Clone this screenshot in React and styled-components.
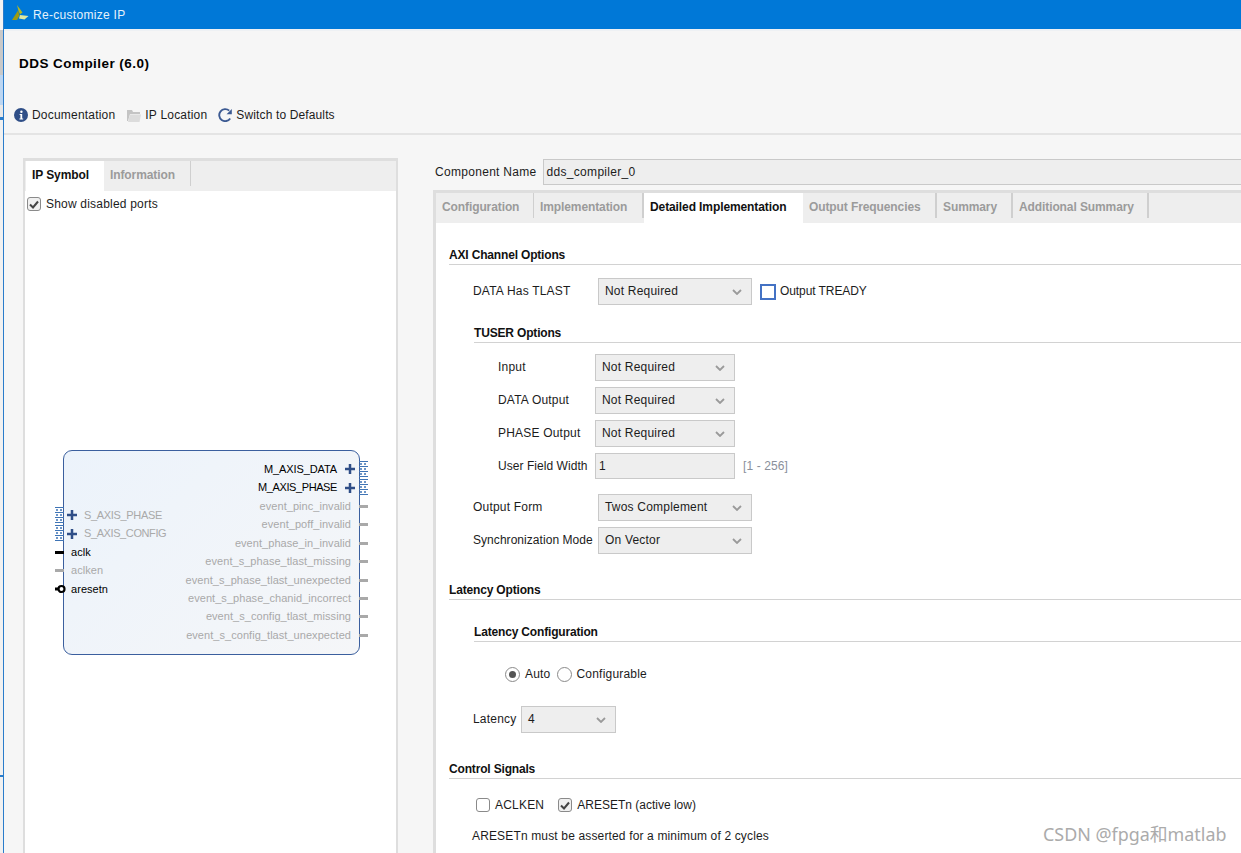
import React from "react";
import styled, { createGlobalStyle } from "styled-components";

const Global = createGlobalStyle`
  html, body { margin: 0; padding: 0; background: #f6f6f6; overflow: hidden; }
  * { box-sizing: border-box; }
`;

const Page = styled.div`
  width: 1241px; height: 853px; display: flex; overflow: hidden; position: relative;
  font-family: "Liberation Sans", Arial, sans-serif; font-size: 12px; letter-spacing: .2px; color: #1c1c1c;
`;
const BackStrip = styled.div`
  width: 3px; flex: none; display: flex; flex-direction: column; background: #f1f1f1;
`;
const StripBit = styled.div`
  height: ${p => p.$h}px; flex: none; background: ${p => p.$c};
`;
const Window = styled.div`
  flex: 1; min-width: 0; display: flex; flex-direction: column; border-left: 1px solid #2a7ccb; background: #f6f6f6;
`;
const TitleBar = styled.div`
  height: 29px; flex: none; display: flex; align-items: center; gap: 4px; padding-left: 8px; background: #0078d7; color: #e6f2fb; letter-spacing: .3px;
`;
const Header = styled.div`
  height: 106px; flex: none; display: flex; flex-direction: column; border-top: 2px solid #eef1f4; border-bottom: 2px solid #e4e4e4; padding-left: 10px;
`;
const Title = styled.h1`
  margin: 25px 0 0 5px; font-size: 13.5px; line-height: 16px; font-weight: 700; color: #000; letter-spacing: .45px;
`;
const Toolbar = styled.div`
  display: flex; align-items: center; margin-top: 35px; height: 16px;
`;
const ToolItem = styled.div`
  display: flex; align-items: center; gap: 4px; margin-right: ${p => p.$gap}px; white-space: nowrap; letter-spacing: ${p => p.$ls ?? .2}px;
`;
const Body = styled.div`
  flex: 1; min-height: 0; display: flex; padding: 23px 0 0 19px;
`;
const LeftPanel = styled.section`
  width: 375px; flex: none; display: flex; flex-direction: column; border: solid #dedede; border-width: 3px 2px 0 2px; background: #fff;
`;
const TabBar = styled.div`
  height: 30px; flex: none; display: flex; background: #eeeeee; padding-left: ${p => p.$pad || 0}px;
`;
const Tab = styled.div`
  width: ${p => p.$w}px; flex: none; font-weight: 700; letter-spacing: -.1px; padding-left: ${p => p.$pad || 6}px; line-height: 28px; height: ${p => p.$active ? 30 : 25}px; white-space: nowrap;
  color: ${p => p.$active ? "#111" : "#9b9b9b"};
  background: ${p => p.$active ? "#fff" : "transparent"};
  border-right: ${p => p.$sep || 0}px solid #cfcfcf;
`;
const CheckRow = styled.label`
  display: flex; align-items: center; gap: 5px; white-space: nowrap;
`;
const ShowRow = styled(CheckRow)`
  margin: 6px 0 0 2px; height: 14px;
`;
const Box = styled.span`
  width: 14px; height: 14px; flex: none; display: flex; align-items: center; justify-content: center; border-radius: 3px; border: 1px solid #8a8a8a; background: ${p => p.$on ? "#f0f0f0" : "#fff"};
`;
const Symbol = styled.div`
  position: relative; width: 297px; height: 205px; margin: 239px 0 0 38px; flex: none; display: flex; justify-content: space-between;
  border: 1px solid #3b5f9e; border-radius: 9px; background: linear-gradient(135deg, #ecf3fb 0%, #f5f6f8 100%);
  font-size: 11px; letter-spacing: .05px;
`;
const PinColumn = styled.div`
  display: flex; flex-direction: column; padding-top: ${p => p.$top}px; align-items: ${p => p.$right ? "flex-end" : "flex-start"};
`;
const PinSpacer = styled.div`
  height: 46px; flex: none;
`;
const Pin = styled.div`
  position: relative; height: 18.45px; line-height: 17px; white-space: nowrap; color: ${p => p.$off ? "#a9a9a9" : "#000"};
  padding-left: ${p => p.$pl || 0}px; padding-right: ${p => p.$pr || 0}px; letter-spacing: ${p => p.$ls ?? .05}px;
`;
const Stub = styled.span`
  position: absolute; top: 7px; width: 9px; height: 3px; background: ${p => p.$off ? "#a9a9a9" : "#000"};
  ${p => p.$right ? "right: -9px;" : "left: -9px;"}
`;
const PortIcon = styled.svg`
  position: absolute; top: ${p => p.$t}px; ${p => p.$side}: ${p => p.$at}px;
`;
const Watermark = styled.div`
  position: absolute; left: 1043px; top: 822px; font-family: "Noto Sans", "Noto Sans CJK SC", sans-serif; font-size: 17.9px; letter-spacing: 0; color: #ababab; white-space: nowrap; line-height: 24px;
`;
const RightPanel = styled.section`
  flex: 1; min-width: 0; margin-left: 35px; display: flex; flex-direction: column;
`;
const NameRow = styled.div`
  display: flex; align-items: center; height: 26px; margin-top: 1px; padding-left: 2px; gap: 6px; white-space: nowrap; letter-spacing: .3px;
`;
const NameInput = styled.div`
  flex: 1; height: 26px; line-height: 24px; padding-left: 3px; background: #eeeeee; border: 1px solid #c9c9c9;
  margin-right: -4px;
`;
const TabPanel = styled.div`
  flex: 1; min-height: 0; margin-top: 5px; border-top: 3px solid #dedede; border-left: 3px solid #dedede; display: flex; flex-direction: column; background: #fff;
`;
const Content = styled.div`
  flex: 1; display: flex; flex-direction: column; padding-left: 13px;
`;
const SectionHead = styled.h3`
  margin: ${p => p.$top}px 0 0 ${p => p.$indent || 0}px; height: 17px; line-height: 14px; font-size: 12px; font-weight: 700; letter-spacing: -.17px; color: #111; border-bottom: 1px solid #d2d2d2;
`;
const Row = styled.div`
  display: flex; align-items: center; height: ${p => p.$h || 27}px; margin: ${p => p.$top}px 0 0 ${p => p.$indent}px; white-space: nowrap;
`;
const Label = styled.span`
  width: ${p => p.$w}px; flex: none; letter-spacing: ${p => p.$ls ?? .2}px; margin-top: ${p => p.$lift ? -2 : 0}px;
`;
const Select = styled.div`
  width: ${p => p.$w}px; height: 27px; flex: none; display: flex; align-items: center; justify-content: space-between; padding: 0 9px 0 6px; background: #eeeeee; border: 1px solid #c9c9c9;
`;
const SelectText = styled.span`
  margin-top: -2px;
`;
const NumberBox = styled.div`
  width: 140px; height: 26px; flex: none; line-height: 24px; padding-left: 3px; background: #eeeeee; border: 1px solid #c9c9c9;
`;
const Hint = styled.span`
  margin-left: 8px; color: #8a909b; letter-spacing: .1px;
`;
const BlueBox = styled.span`
  width: 16px; height: 16px; flex: none; margin: 0 4px 0 8px; background: #fff; border: 2px solid #4472c4;
`;
const TightText = styled.span`
  letter-spacing: ${p => p.$ls}px; margin-top: ${p => p.$lift ? -2 : 0}px;
`;
const Radio = styled.span`
  width: 15px; height: 15px; flex: none; display: flex; align-items: center; justify-content: center; border-radius: 50%; border: 1px solid #8a8a8a; background: #fff; margin-right: 5px;
  &::after { content: ""; width: 7px; height: 7px; border-radius: 50%; background: ${p => p.$on ? "#555" : "transparent"}; }
`;
const RadioGap = styled.span`
  width: 6px; flex: none;
`;
const CheckGroup = styled(CheckRow)`
  margin-right: 14px;
`;
const Note = styled.p`
  margin: 16px 0 0 23px; line-height: 14px; letter-spacing: .15px;
`;

const Chevron = () => (
  <svg width="10" height="6" viewBox="0 0 10 6"><path d="M1 1l4 4 4-4" fill="none" stroke="#9a9a9a" strokeWidth="1.8" /></svg>
);
const Check = () => (
  <svg width="10" height="9" viewBox="0 0 10 9"><path d="M1 4.5l3 3L9 1.5" fill="none" stroke="#444" strokeWidth="2" /></svg>
);
const Logo = () => (
  <svg width="17" height="16" viewBox="0 0 17 16" style={{ marginTop: -3 }}>
    <path d="M0 15L6 5.5l1.5 5L5 15z" fill="#9a9a12" />
    <path d="M5 0l5.5 7.5-2.5 1.8L6.5 6z" fill="#b5b81e" />
    <path d="M8 10l8.5 1-4 3.5-5.5-1z" fill="#dfe7a0" />
  </svg>
);
const InfoIcon = () => (
  <svg width="14" height="14" viewBox="0 0 14 14">
    <circle cx="7" cy="7" r="7" fill="#2f4e87" />
    <circle cx="7.4" cy="3.7" r="1.2" fill="#fff" />
    <path d="M5.6 6h2.6v4.4h1v1H5.4v-1h1V7h-.8z" fill="#fff" />
  </svg>
);
const FolderIcon = () => (
  <svg width="14" height="13" viewBox="0 0 14 13">
    <path d="M0 1h5l1 2h7v2H3L1 12H0z" fill="#c4c4c4" />
    <path d="M3 5.5h11L12.5 13H1z" fill="#dcdcdc" />
  </svg>
);
const RefreshIcon = () => (
  <svg width="14" height="14" viewBox="0 0 14 14">
    <path d="M12.2 10.5A6 6 0 1 1 11.2 2.6" fill="none" stroke="#3c5a92" strokeWidth="1.9" />
    <path d="M13.8 1v5.2H8.6z" fill="#3c5a92" />
  </svg>
);
const Bus = ({ side, at, top }) => (
  <PortIcon $side={side} $at={at} $t={top} width="9" height="16" viewBox="0 0 9 16">
    <path d="M0 .5h9M0 5.5h9M0 10.5h9M0 15.5h9" stroke="#3f74b5" strokeWidth="1" fill="none" />
    <path d="M1 3h2M5 3h2M1 8h2M5 8h2M1 13h2M5 13h2" stroke="#3f74b5" strokeWidth="1.4" fill="none" />
  </PortIcon>
);
const Plus = ({ side, at }) => (
  <PortIcon $side={side} $at={at} $t={3.5} width="10" height="10" viewBox="0 0 10 10">
    <path d="M5 0v10M0 5h10" stroke="#2f4e87" strokeWidth="2.5" />
  </PortIcon>
);
const Bubble = () => (
  <PortIcon $side="left" $at={-9} $t={2.5} width="12" height="12" viewBox="0 0 12 12">
    <path d="M0 6h4" stroke="#000" strokeWidth="3" />
    <circle cx="6.5" cy="6" r="3" fill="#fff" stroke="#000" strokeWidth="2.2" />
  </PortIcon>
);

const rightOff = [
  "event_pinc_invalid", "event_poff_invalid", "event_phase_in_invalid", "event_s_phase_tlast_missing",
  "event_s_phase_tlast_unexpected", "event_s_phase_chanid_incorrect", "event_s_config_tlast_missing", "event_s_config_tlast_unexpected",
];
const rightTabs = [
  ["Configuration", 98, 1], ["Implementation", 110, 2], ["Detailed Implementation", 159, 0, true],
  ["Output Frequencies", 134, 2], ["Summary", 76, 2], ["Additional Summary", 136, 2],
];

const Drop = ({ w, children }) => (
  <Select $w={w}><SelectText>{children}</SelectText><Chevron /></Select>
);

export default function App() {
  return (
    <Page>
      <Global />
      <BackStrip>
        <StripBit $h={30} $c="#f3f3f3" />
        <StripBit $h={45} $c="#c9c9c9" />
        <StripBit $h={30} $c="#bcd6f2" />
        <StripBit $h={12} $c="#e8e8e8" />
        <StripBit $h={3} $c="#2a7ccb" />
        <StripBit $h={655} $c="#f1f1f1" />
        <StripBit $h={2} $c="#2a7ccb" />
      </BackStrip>
      <Window>
        <TitleBar><Logo />Re-customize IP</TitleBar>
        <Header>
          <Title>DDS Compiler (6.0)</Title>
          <Toolbar>
            <ToolItem $gap={12}><InfoIcon />Documentation</ToolItem>
            <ToolItem $gap={11}><FolderIcon />IP Location</ToolItem>
            <ToolItem $gap={0} $ls={.13}><RefreshIcon />Switch to Defaults</ToolItem>
          </Toolbar>
        </Header>
        <Body>
          <LeftPanel>
            <TabBar $pad={1}>
              <Tab $active $w={78} $pad={6}>IP Symbol</Tab>
              <Tab $w={87} $sep={1}>Information</Tab>
            </TabBar>
            <ShowRow><Box $on><Check /></Box>Show disabled ports</ShowRow>
            <Symbol>
              <PinColumn $top={9.9}>
                <PinSpacer />
                <Pin $off $pl={20} $ls={-.33}><Bus side="left" at={-9} top={0} /><Plus side="left" at={3} />S_AXIS_PHASE</Pin>
                <Pin $off $pl={20} $ls={-.4}><Bus side="left" at={-9} top={0} /><Plus side="left" at={3} />S_AXIS_CONFIG</Pin>
                <Pin $pl={7}><Stub />aclk</Pin>
                <Pin $off $pl={7}><Stub $off />aclken</Pin>
                <Pin $pl={7}><Bubble />aresetn</Pin>
              </PinColumn>
              <PinColumn $right $top={9.9}>
                <Pin $pr={22} $ls={-.11}>M_AXIS_DATA<Plus side="right" at={4} /><Bus side="right" at={-9} top={0} /></Pin>
                <Pin $pr={22} $ls={-.4}>M_AXIS_PHASE<Plus side="right" at={4} /><Bus side="right" at={-9} top={0} /></Pin>
                {rightOff.map(n => (
                  <Pin key={n} $off $pr={8}>{n}<Stub $off $right /></Pin>
                ))}
              </PinColumn>
            </Symbol>
          </LeftPanel>
          <RightPanel>
            <NameRow>Component Name<NameInput>dds_compiler_0</NameInput></NameRow>
            <TabPanel>
              <TabBar>
                {rightTabs.map(([t, w, s, a]) => (
                  <Tab key={t} $w={w} $sep={s} $active={a}>{t}</Tab>
                ))}
              </TabBar>
              <Content>
                <SectionHead $top={25}>AXI Channel Options</SectionHead>
                <Row $top={13} $indent={24}>
                  <Label $lift $w={125}>DATA Has TLAST</Label>
                  <Drop w={154}>Not Required</Drop>
                  <BlueBox /><TightText $lift $ls={-.08}>Output TREADY</TightText>
                </Row>
                <SectionHead $top={21} $indent={25}>TUSER Options</SectionHead>
                <Row $top={11} $indent={49}><Label $lift $w={97}>Input</Label><Drop w={140}>Not Required</Drop></Row>
                <Row $top={6} $indent={49}><Label $lift $w={97}>DATA Output</Label><Drop w={140}>Not Required</Drop></Row>
                <Row $top={6} $indent={49}><Label $lift $w={97}>PHASE Output</Label><Drop w={140}>Not Required</Drop></Row>
                <Row $top={6} $h={26} $indent={49}><Label $w={97} $ls={.05}>User Field Width</Label><NumberBox>1</NumberBox><Hint>[1 - 256]</Hint></Row>
                <Row $top={15} $indent={24}><Label $lift $w={125}>Output Form</Label><Drop w={154}>Twos Complement</Drop></Row>
                <Row $top={6} $indent={24}><Label $lift $w={125} $ls={.05}>Synchronization Mode</Label><Drop w={154}>On Vector</Drop></Row>
                <SectionHead $top={29}>Latency Options</SectionHead>
                <SectionHead $top={25} $indent={25}>Latency Configuration</SectionHead>
                <Row $top={24} $h={16} $indent={56}>
                  <Radio $on />Auto<RadioGap /><Radio /><TightText $ls={.2}>Configurable</TightText>
                </Row>
                <Row $top={24} $indent={24}><Label $lift $w={48}>Latency</Label><Drop w={95}>4</Drop></Row>
                <SectionHead $top={29}>Control Signals</SectionHead>
                <Row $top={18} $h={16} $indent={27}>
                  <CheckGroup><Box />ACLKEN</CheckGroup>
                  <CheckGroup><Box $on><Check /></Box><TightText $ls={0}>ARESETn (active low)</TightText></CheckGroup>
                </Row>
                <Note>ARESETn must be asserted for a minimum of 2 cycles</Note>
              </Content>
            </TabPanel>
          </RightPanel>
        </Body>
      </Window>
      <Watermark>CSDN @fpga和matlab</Watermark>
    </Page>
  );
}
